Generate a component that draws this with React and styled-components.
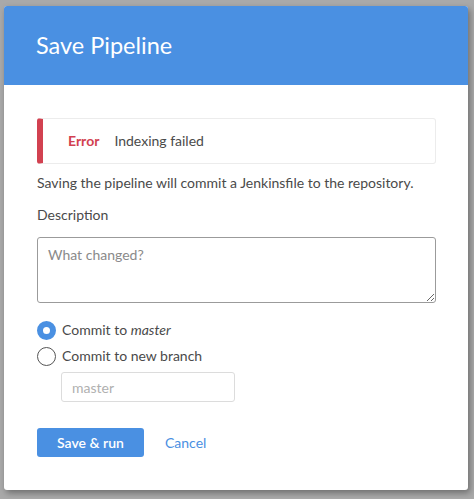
import styled, { createGlobalStyle } from "styled-components";

const GlobalStyle = createGlobalStyle`
  html, body {
    margin: 0;
    padding: 0;
    background: #a9a9a9;
    font-family: Lato, "Open Sans", sans-serif;
  }
`;

const Backdrop = styled.div`
  width: 474px;
  height: 499px;
  overflow: hidden;
  background: #a9a9a9;
`;

const BehindStrip = styled.div`
  height: 6px;
`;

const Modal = styled.div`
  margin-left: 4px;
  width: 464px;
  height: 484px;
  background: #fff;
  border-radius: 3px;
  overflow: hidden;
  box-shadow: 2px 3px 6px rgba(0, 0, 0, 0.35);
  display: flex;
  flex-direction: column;
`;

const Header = styled.div`
  height: 79px;
  background: #4a90e2;
  display: flex;
  align-items: center;
  padding-left: 32px;
  padding-bottom: 2px;
  box-sizing: border-box;
  h1 {
    margin: 0;
    color: #fff;
    font-size: 23.5px;
    font-weight: 400;
  }
`;

const Body = styled.div`
  padding: 33px 32px 0 33px;
  color: #4a4a4a;
  font-size: 14px;
`;

const ErrorBox = styled.div`
  height: 46px;
  box-sizing: border-box;
  border: 1px solid #ececec;
  border-left: 6px solid #d24150;
  border-radius: 3px;
  display: flex;
  align-items: center;
  padding-left: 25px;
  gap: 15px;
  padding-bottom: 2px;
`;

const ErrorLabel = styled.span`
  color: #d24150;
  font-weight: 700;
`;

const Para = styled.p`
  margin: 9px 0 0;
  line-height: 20px;
`;

const Label = styled.div`
  margin-top: 12px;
  line-height: 20px;
`;

const TextArea = styled.textarea`
  display: block;
  margin-top: 12px;
  width: 399px;
  height: 66px;
  box-sizing: border-box;
  border: 1px solid #9b9b9b;
  border-radius: 3px;
  padding: 8px 10px;
  font-family: inherit;
  font-size: 14px;
  color: #4a4a4a;
  resize: vertical;
  &::placeholder {
    color: #8a8a8a;
  }
`;

const RadioGroup = styled.div`
  margin-top: 17px;
  display: flex;
  flex-direction: column;
  gap: 6px;
`;

const RadioRow = styled.label`
  display: flex;
  align-items: center;
  gap: 6px;
  line-height: 20px;
`;

const RadioDot = styled.span`
  width: 19px;
  height: 19px;
  box-sizing: border-box;
  border-radius: 50%;
  border: ${(p) => (p.$checked ? "6px solid #4a90e2" : "1px solid #555")};
  background: #fff;
`;

const BranchInput = styled.input`
  display: block;
  margin: 6px 0 0 24px;
  width: 174px;
  height: 30px;
  box-sizing: border-box;
  border: 1px solid #dcdcdc;
  border-radius: 3px;
  padding: 0 10px;
  font-family: inherit;
  font-size: 14px;
  &::placeholder {
    color: #b0b0b0;
  }
`;

const Actions = styled.div`
  margin-top: 26px;
  display: flex;
  align-items: center;
  gap: 21px;
`;

const PrimaryButton = styled.button`
  width: 107px;
  height: 29px;
  border: none;
  border-radius: 3px;
  background: #4a90e2;
  color: #fff;
  font-family: inherit;
  font-size: 14px;
  font-weight: 600;
`;

const LinkButton = styled.button`
  border: none;
  background: none;
  padding: 0;
  color: #4a90e2;
  font-family: inherit;
  font-size: 14px;
`;

export default function App() {
  return (
    <>
      <GlobalStyle />
      <Backdrop>
        <BehindStrip />
        <Modal>
          <Header>
            <h1>Save Pipeline</h1>
          </Header>
          <Body>
            <ErrorBox>
              <ErrorLabel>Error</ErrorLabel>
              <span>Indexing failed</span>
            </ErrorBox>
            <Para>Saving the pipeline will commit a Jenkinsfile to the repository.</Para>
            <Label>Description</Label>
            <TextArea placeholder="What changed?" />
            <RadioGroup>
              <RadioRow>
                <RadioDot $checked />
                <span>
                  Commit to <em>master</em>
                </span>
              </RadioRow>
              <RadioRow>
                <RadioDot />
                <span>Commit to new branch</span>
              </RadioRow>
            </RadioGroup>
            <BranchInput placeholder="master" />
            <Actions>
              <PrimaryButton>Save &amp; run</PrimaryButton>
              <LinkButton>Cancel</LinkButton>
            </Actions>
          </Body>
        </Modal>
      </Backdrop>
    </>
  );
}
